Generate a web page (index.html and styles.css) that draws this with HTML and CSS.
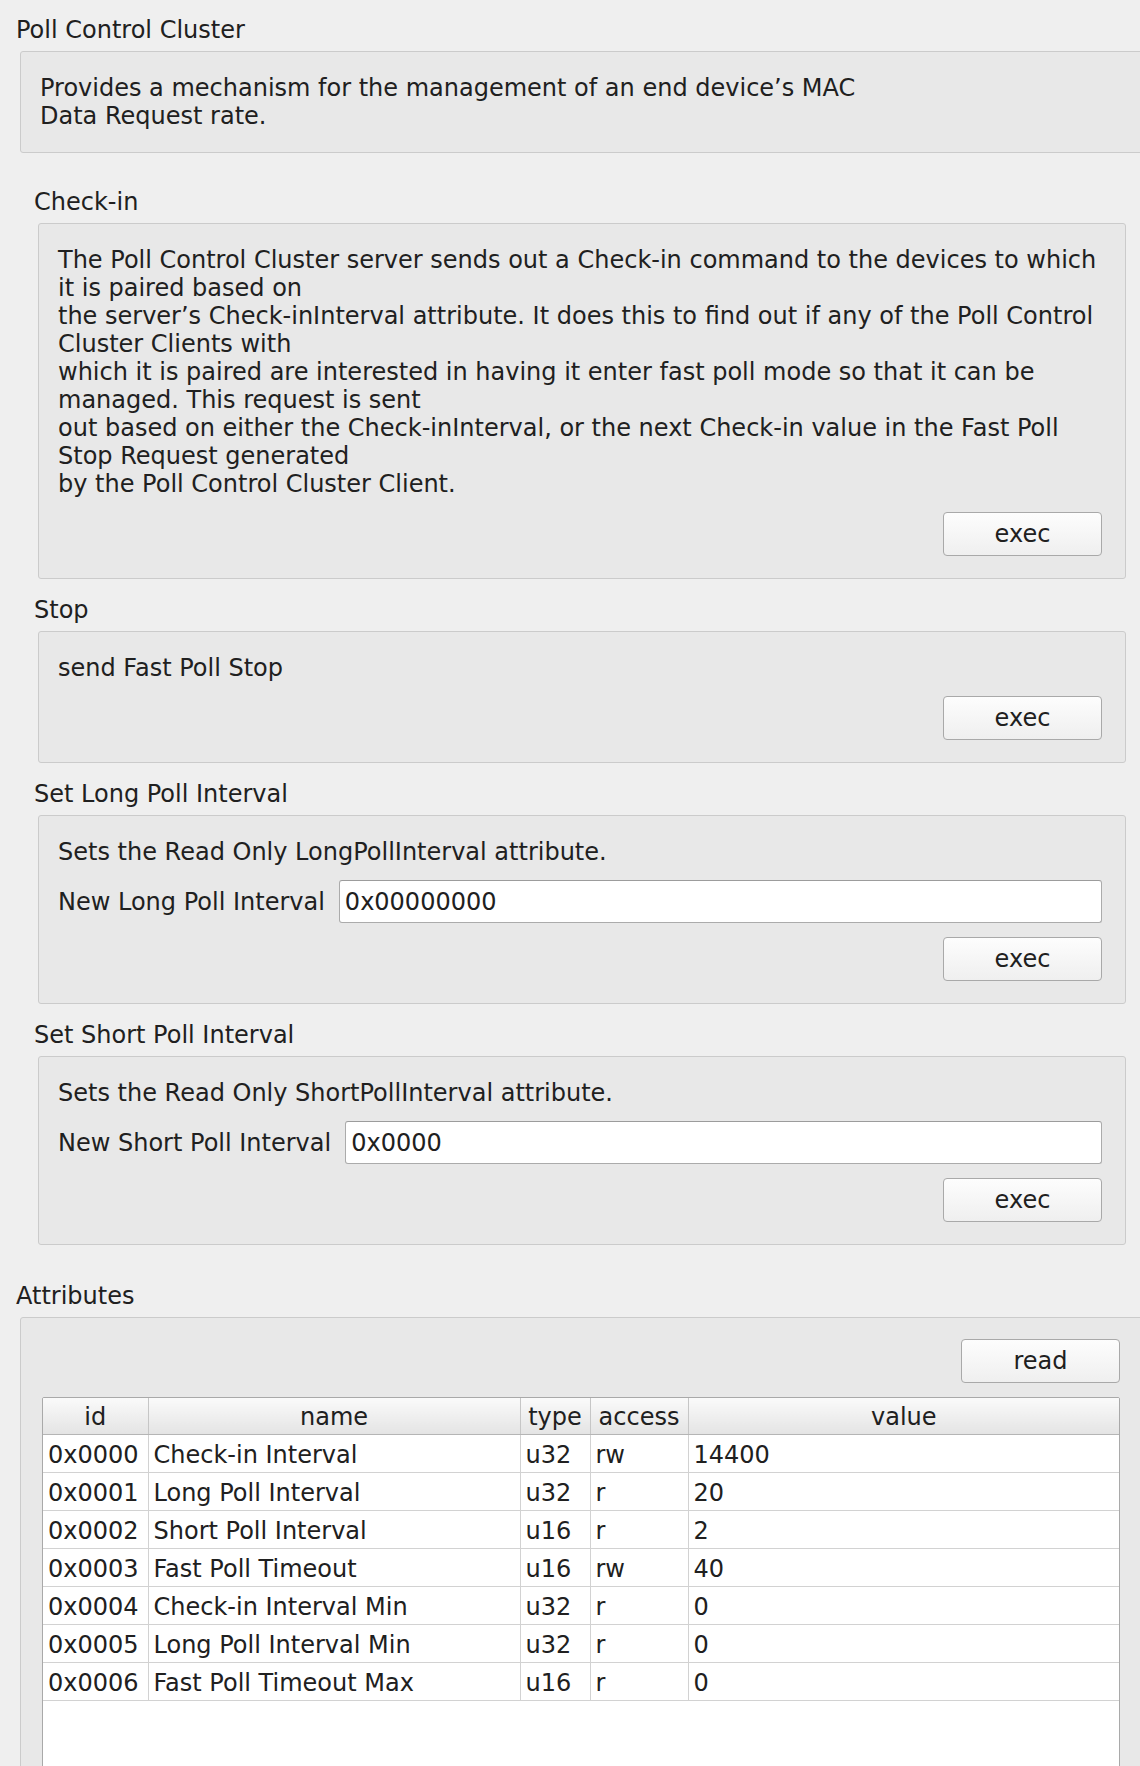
FILE: index.html
```html
<!DOCTYPE html>
<html lang="en">

<head>
  <meta charset="UTF-8">
  <meta name="viewport" content="width=device-width, initial-scale=1.0">
  <title>Poll Control Cluster</title>
  <link rel="stylesheet" href="styles.css">
</head>

<body>
  <div class="page">
    <div class="group-title">Poll Control Cluster</div>
    <div class="group-box">
      <p class="desc">Provides a mechanism for the management of an end device’s MAC<br>Data Request rate.</p>
    </div>

    <div class="commands">
      <section class="command">
        <div class="group-title">Check-in</div>
        <div class="group-box command-box">
          <p class="desc">The Poll Control Cluster server sends out a Check-in command to the devices to which<br>it is paired based on<br>the server’s Check-inInterval attribute. It does this to find out if any of the Poll Control<br>Cluster Clients with<br>which it is paired are interested in having it enter fast poll mode so that it can be<br>managed. This request is sent<br>out based on either the Check-inInterval, or the next Check-in value in the Fast Poll<br>Stop Request generated<br>by the Poll Control Cluster Client.</p>
          <button class="btn">exec</button>
        </div>
      </section>

      <section class="command">
        <div class="group-title">Stop</div>
        <div class="group-box command-box">
          <p class="desc">send Fast Poll Stop</p>
          <button class="btn">exec</button>
        </div>
      </section>

      <section class="command">
        <div class="group-title">Set Long Poll Interval</div>
        <div class="group-box command-box">
          <p class="desc">Sets the Read Only LongPollInterval attribute.</p>
          <div class="field">
            <label for="long-poll">New Long Poll Interval</label>
            <input type="text" id="long-poll" value="0x00000000">
          </div>
          <button class="btn">exec</button>
        </div>
      </section>

      <section class="command">
        <div class="group-title">Set Short Poll Interval</div>
        <div class="group-box command-box">
          <p class="desc">Sets the Read Only ShortPollInterval attribute.</p>
          <div class="field">
            <label for="short-poll">New Short Poll Interval</label>
            <input type="text" id="short-poll" value="0x0000">
          </div>
          <button class="btn">exec</button>
        </div>
      </section>
    </div>

    <section class="attributes">
      <div class="group-title">Attributes</div>
      <div class="group-box attr-box">
        <button class="btn">read</button>
        <div class="table-frame">
          <table>
            <colgroup>
              <col class="col-id">
              <col class="col-name">
              <col class="col-type">
              <col class="col-access">
              <col>
            </colgroup>
            <thead>
              <tr><th>id</th><th>name</th><th>type</th><th>access</th><th>value</th></tr>
            </thead>
            <tbody>
              <tr><td>0x0000</td><td>Check-in Interval</td><td>u32</td><td>rw</td><td>14400</td></tr>
              <tr><td>0x0001</td><td>Long Poll Interval</td><td>u32</td><td>r</td><td>20</td></tr>
              <tr><td>0x0002</td><td>Short Poll Interval</td><td>u16</td><td>r</td><td>2</td></tr>
              <tr><td>0x0003</td><td>Fast Poll Timeout</td><td>u16</td><td>rw</td><td>40</td></tr>
              <tr><td>0x0004</td><td>Check-in Interval Min</td><td>u32</td><td>r</td><td>0</td></tr>
              <tr><td>0x0005</td><td>Long Poll Interval Min</td><td>u32</td><td>r</td><td>0</td></tr>
              <tr><td>0x0006</td><td>Fast Poll Timeout Max</td><td>u16</td><td>r</td><td>0</td></tr>
            </tbody>
          </table>
        </div>
      </div>
    </section>
  </div>
</body>

</html>
```

FILE: styles.css
```css
html,
body {
  margin: 0;
  height: 100%;
  overflow: hidden;
}

body {
  font-family: 'DejaVu Sans', 'Noto Sans', sans-serif;
  font-size: 24px;
  line-height: 28px;
  color: #202020;
  background-color: #efefef;
}

.page {
  width: 1127px;
  padding: 16px 0 0 16px;
  display: flex;
  flex-direction: column;
}

.group-title {
  height: 28px;
  white-space: nowrap;
}

.group-box {
  margin: 7px 0 0 4px;
  padding: 22px 23px 22px 19px;
  border: 1px solid #cbcbcb;
  border-radius: 3px;
  background-color: #e8e8e8;
}

.desc {
  margin: 0;
  white-space: nowrap;
}

.commands {
  display: flex;
  flex-direction: column;
  gap: 17px;
  margin: 35px 17px 0 18px;
}

.command-box {
  display: flex;
  flex-direction: column;
  gap: 14px;
}

.btn {
  align-self: flex-end;
  width: 159px;
  height: 44px;
  padding: 0;
  font-family: inherit;
  font-size: 24px;
  color: #202020;
  border: 1px solid #a9a9a9;
  border-radius: 4px;
  background: linear-gradient(#fdfdfd, #efefef);
}

.field {
  display: flex;
  align-items: center;
  gap: 14px;
}

.field label {
  white-space: nowrap;
}

.field input {
  flex: 1;
  height: 43px;
  box-sizing: border-box;
  padding: 0 5px;
  font-family: inherit;
  font-size: 24px;
  color: #202020;
  background-color: #ffffff;
  border: 1px solid #ababab;
  border-top-color: #9c9c9c;
  border-radius: 3px;
  outline: none;
}

/* attributes table */

.attributes {
  margin-top: 37px;
}

.attr-box {
  display: flex;
  flex-direction: column;
  padding: 21px 22px 0 21px;
  height: 600px;
}

.table-frame {
  margin-top: 14px;
  height: 500px;
  background-color: #ffffff;
  border: 1px solid #a9a9a9;
  border-radius: 2px;
  overflow: hidden;
}

table {
  width: 100%;
  border-collapse: collapse;
  table-layout: fixed;
}

.col-id {
  width: 105px;
}

.col-name {
  width: 372px;
}

.col-type {
  width: 70px;
}

.col-access {
  width: 98px;
}

th {
  height: 34px;
  padding: 2px 0 0;
  font-weight: normal;
  text-align: center;
  white-space: nowrap;
  background: linear-gradient(#fafafa, #e4e4e4);
  border-right: 1px solid #c6c6c6;
  border-bottom: 1px solid #b5b5b5;
}

td {
  height: 34px;
  padding: 3px 5px 0;
  white-space: nowrap;
  overflow: hidden;
  border-right: 1px solid #d2d2d2;
  border-bottom: 1px solid #d2d2d2;
}

th:last-child,
td:last-child {
  border-right: none;
}
```
